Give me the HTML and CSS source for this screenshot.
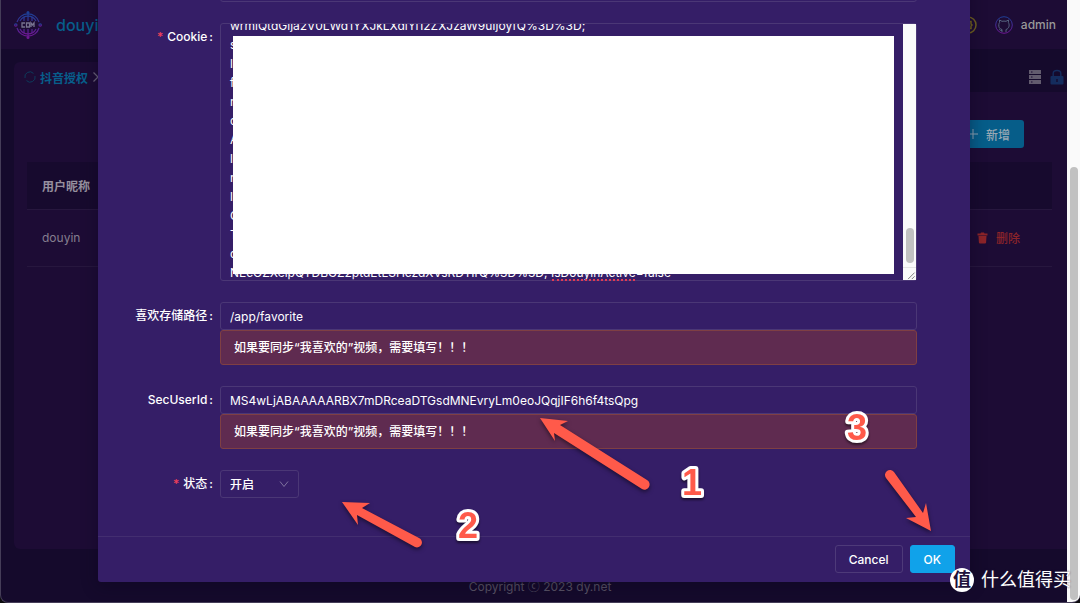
FILE: index.html
```html
<!DOCTYPE html>
<html lang="zh-CN">
  <head>
    <meta charset="UTF-8" />
    <meta name="viewport" content="width=device-width, initial-scale=1.0" />
    <title>douyin</title>
    <link rel="stylesheet" href="styles.css">
  </head>
  <body>
    <div class="window">
      <div class="page">
        <header class="header">
          <svg class="logo" viewBox="0 0 28 28" fill="none">
            <defs>
              <linearGradient id="logo-line" x1="0" y1="0" x2="0" y2="1">
                <stop offset="0" stop-color="#1d3f96" />
                <stop offset="1" stop-color="#6d1792" />
              </linearGradient>
            </defs>
            <g stroke="url(#logo-line)" stroke-width="1.2">
              <path d="M3 11A11.5 11.5 0 0 1 25 11M3 17A11.5 11.5 0 0 0 25 17" />
              <path d="M6 10A9 9 0 0 1 22 10M6 18A9 9 0 0 0 22 18" />
              <path d="M14.1 2L14 10M14.1 26L14 18M10 6L10 10M18 6L18 10M10 22L10 18M18 22L18 18" />
              <circle cx="1.8" cy="14" r="1.2" />
              <circle cx="26.2" cy="14" r="1.2" />
            </g>
            <circle cx="14" cy="1.6" r="1.5" fill="#1d3f96" />
            <circle cx="14" cy="26.4" r="1.5" fill="#6d1792" />
            <path d="M11 12H8V16H11M12.5 12H15.5V16H12.5ZM17 16V12L18.5 14L20 12V16" stroke="#77738f" stroke-width="1.3" />
          </svg>
          <span class="brand">douyin</span>
          <div class="header-right">
            <svg class="icon-coin" viewBox="0 0 18 18" fill="none" stroke="#70611f" stroke-width="1.5">
              <circle cx="9" cy="9" r="8" />
              <path d="M7 5.500H6V8L5 9L6 10V12.500H7M11 5.500H12V8L13 9L12 10V12.500H11" />
            </svg>
            <svg class="icon-github" viewBox="0 0 18 18" fill="none">
              <circle cx="9" cy="9" r="8.300" stroke="url(#logo-line)" />
              <path d="M7 16V13.500C4.500 13 3.500 11 3.800 8.500C3.900 7.500 4.300 7 4.600 6.600L4.500 4L7 5.300Q9 4.900 11 5.300L13.500 4L13.400 6.600C14.500 8 14.800 12.500 11 13.500V16M7 14.500C5.500 15 5 13.800 4.200 13.300" stroke="#55627f" />
            </svg>
            <span class="user">admin</span>
          </div>
        </header>

        <nav class="tabs">
          <a class="tab" href="#">
            <svg viewBox="0 0 12 12" fill="none" stroke="#0d3c5c">
              <path d="M1 7A5 5 0 0 1 9.500 2.400M11 5A5 5 0 0 1 2.500 9.600" />
            </svg>
            抖音授权
            <svg class="arrow" viewBox="0 0 8 12" fill="none" stroke="#69617a" stroke-width="1.3">
              <path d="M1.500 1.500L6 6L1.500 10.500" />
            </svg>
          </a>
          <div class="tab-tools">
            <svg viewBox="0 0 14 16">
              <path d="M1 1H13V5H1ZM1 6H13V10H1ZM1 11H13V15H1Z" fill="#625b6e" />
              <path d="M3 3H4.500M3 8H4.500M3 13H4.500" stroke="#1d0c35" />
            </svg>
            <svg viewBox="0 0 14 16">
              <path d="M3.200 8V4.500Q3.200 1.500 7 1.500T10.800 4.500V8" fill="none" stroke="#142c5d" stroke-width="1.400" />
              <rect x="0.500" y="7" width="13" height="8.500" rx="1" fill="#142c5d" />
              <path d="M7 10V13" stroke="#150a2c" stroke-width="1.300" />
            </svg>
          </div>
        </nav>

        <main class="panel">
          <div class="toolbar">
            <button class="add" type="button">
              <svg viewBox="0 0 10 10" stroke="#8aa3b3"><path d="M5 0V10M0 5H10" /></svg>
              新增
            </button>
          </div>
          <table class="users">
            <thead>
              <tr><th>用户昵称</th><th class="actions"></th></tr>
            </thead>
            <tbody>
              <tr>
                <td>douyin</td>
                <td class="actions">
                  <button class="remove" type="button">
                    <svg viewBox="0 0 10 12" fill="#8c2429">
                      <path d="M0 1.500H3L3.500 0.500H6.500L7 1.500H10V3.500H0ZM1 4H9L8.600 10.500Q8.500 11.500 7.500 11.500H2.500Q1.500 11.500 1.400 10.500Z" />
                    </svg>
                    删除
                  </button>
                </td>
              </tr>
            </tbody>
          </table>
        </main>

        <footer class="footer">Copyright ⓒ 2023 dy.net</footer>

        <div class="overlay">
          <div class="modal" role="dialog">
            <form class="form">
              <span></span>
              <input class="input" type="text" aria-label="Name">

              <label class="required" for="cookie">Cookie</label>
              <div class="cookie">
                <textarea id="cookie" wrap="off" spellcheck="false">wrmiQtdGlja2V0LWd1YXJkLXdlYi12ZXJzaW9uIjoyfQ%3D%3D;
s
l
f
r
d
A
l
r
l
C
T
d
NEcOZXelpQTDBGZ2ptdEtLSHczdXVsRDTIrQ%3D%3D; IsDouyinActive=false</textarea>
                <div class="mask"></div>
                <div class="spelling"></div>
                <div class="track">
                  <div class="thumb"></div>
                  <svg class="grip" viewBox="0 0 13 13" stroke="#777"><path d="M5 12L12 5M9 12L12 9" /></svg>
                </div>
              </div>

              <label for="path">喜欢存储路径</label>
              <div>
                <input class="input" id="path" type="text" value="/app/favorite">
                <div class="alert">如果要同步“我喜欢的”视频，需要填写！！！</div>
              </div>

              <label for="sec">SecUserId</label>
              <div>
                <input class="input" id="sec" type="text" value="MS4wLjABAAAAARBX7mDRceaDTGsdMNEvryLm0eoJQqjIF6h6f4tsQpg">
                <div class="alert">如果要同步“我喜欢的”视频，需要填写！！！</div>
              </div>

              <label class="required" for="status">状态</label>
              <div class="select">
                <select id="status">
                  <option>开启</option>
                  <option>关闭</option>
                </select>
                <svg viewBox="0 0 10 8" fill="none" stroke="#7f729f"><path d="M1 1.500L5 6.500L9 1.500" /></svg>
              </div>
            </form>
            <div class="modal-footer">
              <button class="btn" type="button">Cancel</button>
              <button class="btn primary" type="button">OK</button>
            </div>
          </div>
        </div>
      </div>
      <div class="scrollbar"><div class="scroll-thumb"></div></div>
    </div>

    <!-- step markers -->
    <svg class="marks" viewBox="0 0 1080 603">
      <g class="arrows">
        <path d="M540 418L568 421L560 425L647 480A5 5 0 0 1 642 489L554 433L555 441Z" />
        <path d="M342 502L370 503L362 508L419 538A4.800 4.800 0 0 1 415 547L357 515L358 525Z" />
        <path d="M931 531L926 503L923 513L894 472A4.800 4.800 0 0 0 886 478L916 517L906 518Z" />
      </g>
      <g class="numbers">
        <text x="682" y="495">1</text>
        <text x="458" y="538">2</text>
        <text x="847" y="440">3</text>
      </g>
    </svg>

    <div class="watermark">
      <span class="badge">值</span>
      <span>什么值得买</span>
    </div>

    <script>
      const cookie = document.getElementById("cookie");
      cookie.scrollTop = 8;
    </script>
  </body>
</html>
```
FILE: styles.css
```css
* {
  box-sizing: border-box;
}
body {
  margin: 0;
  background: #0b0b0d;
  font-family: Inter, "Noto Sans CJK SC", sans-serif;
  font-size: 12px;
  color: #fff;
}
button,
input,
select,
textarea {
  font: inherit;
  color: inherit;
}
svg {
  flex: none;
}
.window {
  display: flex;
  min-height: 100vh;
  border-left: 1px solid #453d58;
  border-bottom: 1px solid #453d58;
  border-radius: 0 0 8px 8px;
  overflow: hidden;
  background: #150a2c;
}
.page {
  position: relative;
  flex: 1;
  min-width: 0;
  display: flex;
  flex-direction: column;
}
.header {
  display: flex;
  align-items: center;
  height: 49px;
  padding: 0 11px 0 13px;
  background: #1d0c35;
}
.logo {
  width: 28px;
  height: 28px;
}
.brand {
  margin-left: 14px;
  font-size: 16px;
  font-weight: 500;
  color: #075e8b;
}
.header-right {
  display: flex;
  align-items: center;
  margin-left: auto;
}
.icon-coin,
.icon-github {
  width: 18px;
  height: 18px;
}
.icon-github {
  margin: 0 8px 0 18px;
}
.user {
  font-weight: 500;
  color: #999;
}
.tabs {
  display: flex;
  justify-content: space-between;
  margin: 13px 0 0 13px;
  height: 30px;
}
.tab {
  display: flex;
  align-items: center;
  gap: 4px;
  padding: 0 10px;
  border-radius: 6px 6px 0 0;
  background: #1d0c35;
  color: #075e8b;
  font-weight: 700;
  text-decoration: none;
}
.tab svg {
  width: 12px;
  height: 12px;
}
.tab .arrow {
  width: 8px;
}
.tab-tools {
  display: flex;
  align-items: center;
  gap: 8px;
  padding-right: 3px;
}
.tab-tools svg {
  width: 14px;
  height: 16px;
}
.panel {
  flex: 1;
  margin-left: 13px;
  padding: 28px 15px 0 13px;
  border-radius: 0 0 0 6px;
  background: #1d0c35;
}
.toolbar {
  display: flex;
  justify-content: flex-end;
  padding-right: 28px;
  margin-bottom: 14px;
}
.add {
  display: flex;
  align-items: center;
  gap: 8px;
  height: 28px;
  padding: 0 14px;
  border: 0;
  border-radius: 3px;
  background: #065d89;
  color: #98a8b4;
  font-weight: 500;
}
.add svg {
  width: 10px;
  height: 10px;
}
.users {
  width: 100%;
  border-collapse: collapse;
  color: #857e8f;
}
.users th,
.users td {
  padding: 0 15px;
  border-bottom: 1px solid #27173e;
  text-align: left;
}
.users th {
  height: 47px;
  background: #170a2e;
  color: #96909e;
}
.users td {
  height: 57px;
}
.users .actions {
  width: 90px;
}
.remove {
  display: flex;
  align-items: center;
  gap: 8px;
  padding: 0;
  border: 0;
  background: none;
  color: #8c2429;
  font-weight: 500;
}
.remove svg {
  width: 11px;
  height: 12px;
}
.footer {
  height: 53px;
  padding: 29px 0 0 12px;
  line-height: 18px;
  text-align: center;
  color: #5a5466;
}
.overlay {
  position: absolute;
  inset: 0;
  display: flex;
  flex-direction: column;
  justify-content: flex-end;
  align-items: center;
  padding-bottom: 20px;
  overflow: hidden;
}
.modal {
  flex: none;
  width: 82%;
  max-width: 872px;
  border-radius: 0 0 3px 3px;
  background: #351e67;
  box-shadow: 0 4px 16px rgba(10, 4, 28, 0.4);
  font-weight: 500;
}
.form {
  display: grid;
  grid-template-columns: 115px 1fr;
  column-gap: 7px;
  row-gap: 21px;
  padding: 0 53px 38px 0;
}
.form label {
  line-height: 28px;
  text-align: right;
}
.form label::after {
  content: ":";
  margin-left: 2px;
}
.form .required::before {
  content: "*";
  margin-right: 4px;
  color: #f0405a;
}
.input {
  display: block;
  width: 100%;
  height: 28px;
  padding: 0 9px;
  border: 1px solid #4b3776;
  border-radius: 3px;
  background: none;
  outline: none;
  font-weight: 400;
}
.cookie {
  position: relative;
}
.cookie textarea {
  display: block;
  width: 100%;
  height: 258px;
  padding: 0 9px;
  border: 1px solid #4b3776;
  border-radius: 3px;
  background: none;
  font-weight: 400;
  line-height: 19px;
  resize: none;
  outline: none;
  overflow: hidden;
}
.mask {
  position: absolute;
  inset: 13px 23px 7px 13px;
  background: #fff;
}
.spelling {
  position: absolute;
  left: 332px;
  bottom: 0;
  width: 83px;
  border-bottom: 2px dotted #e23a55;
}
.track {
  position: absolute;
  top: 1px;
  right: 1px;
  bottom: 1px;
  width: 13px;
  background: #fafafa;
}
.thumb {
  position: absolute;
  left: 3px;
  bottom: 17px;
  width: 8px;
  height: 35px;
  border-radius: 4px;
  background: #c1c1c1;
}
.grip {
  position: absolute;
  left: 0;
  bottom: 0;
  width: 13px;
  height: 13px;
  border-top: 1px solid #e4e4e4;
}
.alert {
  height: 35px;
  padding: 0 13px;
  border: 1px solid #7f3f43;
  border-radius: 3px;
  background: #5f2b50;
  line-height: 34px;
}
.select {
  position: relative;
  width: 79px;
}
.select select {
  display: block;
  width: 100%;
  height: 28px;
  padding: 0 9px;
  border: 1px solid #4b3776;
  border-radius: 3px;
  background: none;
  appearance: none;
}
.select option {
  background: #351e67;
}
.select svg {
  position: absolute;
  top: 10px;
  right: 10px;
  width: 10px;
  height: 8px;
  pointer-events: none;
}
.modal-footer {
  display: flex;
  justify-content: flex-end;
  gap: 7px;
  padding: 8px 15px 9px;
  border-top: 1px solid #432e70;
}
.btn {
  height: 28px;
  padding: 0 13px;
  border: 1px solid #4e3a79;
  border-radius: 3px;
  background: none;
}
.btn.primary {
  border-color: #10a2ea;
  background: #10a2ea;
}
.scrollbar {
  position: relative;
  width: 13px;
  background: #fafafa;
}
.scroll-thumb {
  position: absolute;
  top: 167px;
  right: 2px;
  bottom: 2px;
  width: 8px;
  border-radius: 4px;
  background: #c1c1c1;
}
.marks {
  position: absolute;
  top: 0;
  left: 0;
  width: 1080px;
  height: 603px;
  pointer-events: none;
}
.arrows {
  fill: #ff5a4a;
  filter: drop-shadow(0 2px 2px rgba(0, 0, 0, 0.5));
}
.numbers {
  font: bold 36px "Liberation Sans", sans-serif;
  fill: #ff5a4a;
  stroke: #fff;
  stroke-width: 6px;
  stroke-linejoin: round;
  paint-order: stroke;
  filter: drop-shadow(0 2px 1px rgba(0, 0, 0, 0.5));
}
.watermark {
  position: absolute;
  right: 9px;
  bottom: 10px;
  display: flex;
  align-items: center;
  gap: 7px;
  font-size: 18px;
  line-height: 26px;
  text-shadow: 0 0 2px #2a2040;
}
.badge {
  width: 24px;
  height: 24px;
  border-radius: 50%;
  background: #fff;
  color: #20123c;
  font-weight: 700;
  line-height: 24px;
  text-align: center;
  text-shadow: none;
}
```
